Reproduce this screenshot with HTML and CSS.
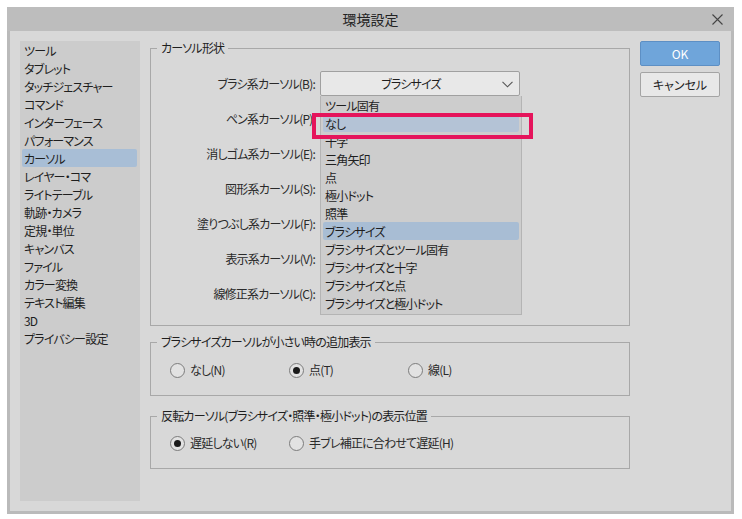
FILE: index.html
```html
<!DOCTYPE html>
<html lang="ja">
  <head>
    <meta charset="UTF-8" />
    <title>環境設定</title>
    <link rel="stylesheet" href="styles.css">
  </head>
  <body>
    <div class="window">
      <div class="titlebar">
        <span class="title">環境設定</span>
        <svg class="close" width="11" height="11" viewBox="0 0 11 11">
          <path d="M0.5 0.5 L10.5 10.5 M10.5 0.5 L0.5 10.5" stroke="#444" stroke-width="1.1" fill="none" />
        </svg>
      </div>
      <div class="content">
        <ul class="sidebar">
          <li>ツール</li>
          <li>タブレット</li>
          <li>タッチジェスチャー</li>
          <li>コマンド</li>
          <li>インターフェース</li>
          <li>パフォーマンス</li>
          <li class="selected">カーソル</li>
          <li>レイヤー・コマ</li>
          <li>ライトテーブル</li>
          <li>軌跡・カメラ</li>
          <li>定規・単位</li>
          <li>キャンバス</li>
          <li>ファイル</li>
          <li>カラー変換</li>
          <li>テキスト編集</li>
          <li>3D</li>
          <li>プライバシー設定</li>
        </ul>

        <div class="main">
          <fieldset class="group shape">
            <legend>カーソル形状</legend>
            <div class="rows">
              <div class="label">ブラシ系カーソル(B):</div>
              <div class="combo-wrap">
                <div class="combo">
                  <span>ブラシサイズ</span>
                  <svg class="chevron" width="11" height="7" viewBox="0 0 11 7">
                    <path d="M0.5 0.8 L5.5 5.8 L10.5 0.8" stroke="#555" stroke-width="1.1" fill="none" />
                  </svg>
                </div>
                <ul class="dropdown">
                  <li>ツール固有</li>
                  <li class="soft">なし</li>
                  <li>十字</li>
                  <li>三角矢印</li>
                  <li>点</li>
                  <li>極小ドット</li>
                  <li>照準</li>
                  <li class="current">ブラシサイズ</li>
                  <li>ブラシサイズとツール固有</li>
                  <li>ブラシサイズと十字</li>
                  <li>ブラシサイズと点</li>
                  <li>ブラシサイズと極小ドット</li>
                  <div class="marker"></div>
                </ul>
              </div>
              <div class="label">ペン系カーソル(P):</div>
              <div></div>
              <div class="label">消しゴム系カーソル(E):</div>
              <div></div>
              <div class="label">図形系カーソル(S):</div>
              <div></div>
              <div class="label">塗りつぶし系カーソル(F):</div>
              <div></div>
              <div class="label">表示系カーソル(V):</div>
              <div></div>
              <div class="label">線修正系カーソル(C):</div>
              <div></div>
            </div>
          </fieldset>

          <fieldset class="group extra">
            <legend>ブラシサイズカーソルが小さい時の追加表示</legend>
            <div class="radios">
              <label class="radio"><span class="dot"></span>なし(N)</label>
              <label class="radio checked"><span class="dot"></span>点(T)</label>
              <label class="radio"><span class="dot"></span>線(L)</label>
            </div>
          </fieldset>

          <fieldset class="group invert">
            <legend>反転カーソル(ブラシサイズ・照準・極小ドット)の表示位置</legend>
            <div class="radios">
              <label class="radio checked"><span class="dot"></span>遅延しない(R)</label>
              <label class="radio"><span class="dot"></span>手ブレ補正に合わせて遅延(H)</label>
            </div>
          </fieldset>
        </div>

        <div class="buttons">
          <button class="btn ok">OK</button>
          <button class="btn">キャンセル</button>
        </div>
      </div>
    </div>
  </body>
</html>
```

FILE: styles.css
```css
html,
body {
  margin: 0;
  background-color: #ffffff;
}
body {
  padding: 7px;
  font-family: "Noto Sans CJK JP", "Noto Sans", sans-serif;
  font-size: 12px;
  font-feature-settings: "palt";
  letter-spacing: -0.8px;
  color: #1e1e1e;
}
.window {
  width: 727px;
  height: 507px;
  box-sizing: border-box;
  background-color: #bababa;
  display: flex;
  flex-direction: column;
  padding: 0 3px 3px 3px;
}
.titlebar {
  height: 24px;
  margin: 0 -3px;
  display: flex;
  align-items: center;
  justify-content: center;
  position: relative;
  background-color: #bdbdbd;
}
.title {
  font-size: 14px;
  letter-spacing: 0;
  color: #222;
  line-height: 24px;
}
.close {
  position: absolute;
  right: 11px;
  top: 7px;
}
.content {
  flex: 1;
  display: flex;
  padding: 10px 11px 10px 10px;
  gap: 10px;
  background-color: #d8d8d8;
}
.sidebar {
  list-style: none;
  margin: 0;
  padding: 0;
  width: 120px;
  background-color: #cccccc;
}
.sidebar li {
  height: 18px;
  line-height: 20px;
  padding-left: 4px;
}
.sidebar li.selected {
  margin: 0 3px 0 2px;
  padding-left: 2px;
  border-radius: 2px;
  background-color: #a8bed6;
}
.main {
  width: 480px;
  display: flex;
  flex-direction: column;
}
.group {
  margin: 0;
  padding: 0;
  min-width: 0;
  border: 1px solid #a8a8a8;
}
.group legend {
  margin-left: 6px;
  padding: 0 4px;
  line-height: 14px;
  height: 14px;
}
.shape {
  height: 285px;
  box-sizing: border-box;
}
.rows {
  display: grid;
  grid-template-columns: 164px 201px;
  column-gap: 5px;
  grid-auto-rows: 35px;
  padding-top: 16px;
}
.label {
  text-align: right;
  line-height: 25px;
  color: #2a2a2a;
}
.combo-wrap {
  position: relative;
  z-index: 1;
}
.combo {
  width: 200px;
  height: 25px;
  box-sizing: border-box;
  border: 1px solid #a0a0a0;
  border-radius: 2px;
  background-color: #e8e8e8;
  display: flex;
  align-items: center;
  justify-content: center;
  padding-right: 18px;
  position: relative;
}
.chevron {
  position: absolute;
  right: 6px;
  top: 9px;
}
.dropdown {
  position: absolute;
  left: 0;
  top: 25px;
  width: 202px;
  height: 219px;
  box-sizing: border-box;
  margin: 0;
  padding: 0 2px;
  list-style: none;
  border: 1px solid #b4b4b4;
  border-top: none;
  background-color: #cdcdcd;
}
.dropdown li {
  height: 18px;
  line-height: 19px;
  padding-left: 2px;
  border-radius: 2px;
}
.dropdown li.soft {
  background-color: #b4c3d6;
}
.dropdown li.current {
  background-color: #a8bdd4;
}
.marker {
  position: absolute;
  left: -9px;
  top: 17px;
  width: 213px;
  height: 18px;
  border: 4px solid #e5145b;
}
.extra {
  margin-top: 9px;
  height: 61px;
  box-sizing: border-box;
}
.invert {
  margin-top: 13px;
  height: 60px;
  box-sizing: border-box;
}
.radios {
  display: flex;
  padding: 13px 0 0 19px;
}
.invert .radios {
  padding-top: 12px;
}
.radio {
  width: 119px;
  display: flex;
  align-items: center;
  gap: 5px;
  line-height: 16px;
  color: #2a2a2a;
}
.radio:last-child {
  width: auto;
}
.dot {
  width: 13px;
  height: 13px;
  border: 1px solid #7c7c7c;
  border-radius: 50%;
  background-color: #e2e2e2;
  display: flex;
  align-items: center;
  justify-content: center;
}
.radio.checked .dot::after {
  content: "";
  width: 7px;
  height: 7px;
  border-radius: 50%;
  background-color: #1a1a1a;
}
.buttons {
  width: 80px;
  display: flex;
  flex-direction: column;
  gap: 6px;
}
.btn {
  height: 25px;
  box-sizing: border-box;
  font: inherit;
  font-feature-settings: "palt";
  letter-spacing: 0;
  border: 1px solid #a4a4a4;
  border-radius: 2px;
  background-color: #e8e8e8;
  color: #222;
  padding: 0;
}
.btn.ok {
  background-color: #6fa5da;
  border-color: #5d8fc4;
  color: #ffffff;
}
```
